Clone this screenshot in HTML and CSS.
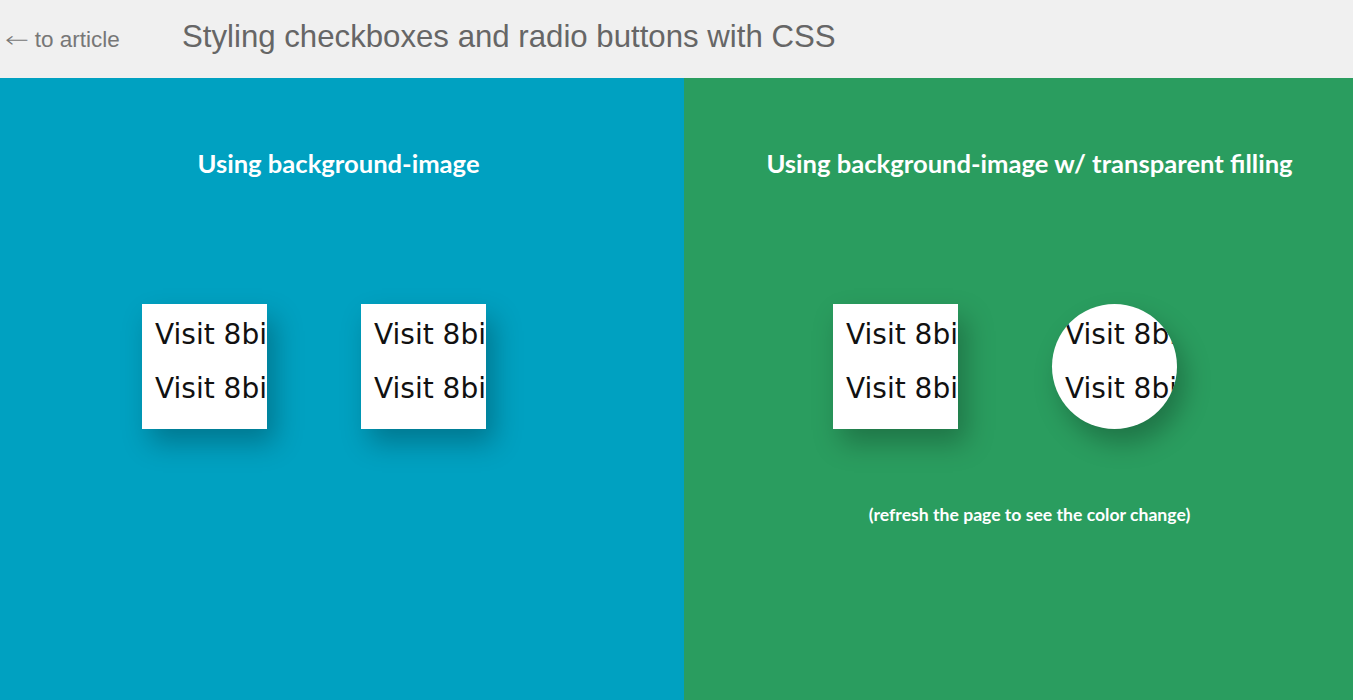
FILE: index.html
```html
<!DOCTYPE html>
<html>
<head>
<meta charset="utf-8">
<link rel="stylesheet" href="styles.css">
</head>
<body>
<header class="topbar">
  <a class="back" href="#"><span class="arrow">&larr;</span> to article</a>
  <h1 class="title">Styling checkboxes and radio buttons with CSS</h1>
</header>
<main class="panels">
  <section class="panel panel-blue">
    <h2 class="heading">Using background-image</h2>
    <div class="row">
      <div class="box"><span>Visit 8bit</span><span>Visit 8bit</span></div>
      <div class="box"><span>Visit 8bit</span><span>Visit 8bit</span></div>
    </div>
  </section>
  <section class="panel panel-green">
    <h2 class="heading">Using background-image w/ transparent filling</h2>
    <div class="row">
      <div class="box"><span>Visit 8bit</span><span>Visit 8bit</span></div>
      <div class="box round"><span>Visit 8bit</span><span>Visit 8bit</span></div>
    </div>
    <p class="note">(refresh the page to see the color change)</p>
  </section>
</main>
</body>
</html>
```
FILE: styles.css
```css
html, body {
  margin: 0;
  padding: 0;
  height: 100%;
  overflow: hidden;
}
body {
  font-family: "Liberation Sans", Arial, sans-serif;
  background: #f0f0f0;
}
.topbar {
  height: 78px;
  background: #f0f0f0;
  display: flex;
  align-items: center;
}
.back {
  color: #777;
  text-decoration: none;
  font-size: 22.5px;
  margin-left: 5px;
  width: 177px;
  padding-top: 1px;
  white-space: nowrap;
}
.arrow {
  display: inline-block;
  font-family: "DejaVu Sans", sans-serif;
  font-size: 22px;
  font-weight: 300;
  transform: scaleX(1.3);
  transform-origin: left center;
  margin-right: 5px;
}
.title {
  margin: 0 0 4px;
  font-weight: normal;
  font-size: 31.2px;
  color: #666;
  white-space: nowrap;
}
.panels {
  display: grid;
  grid-template-columns: 684px 1fr;
  height: 622px;
}
.panel {
  color: #fff;
}
.panel-blue { background: #00a1c1; }
.panel-green { background: #2a9d5f; }
.heading {
  font-family: Lato, "Open Sans", sans-serif;
  font-weight: 700;
  font-size: 25.6px;
  margin: 69px 0 0;
  line-height: 32px;
  text-align: center;
  white-space: nowrap;
}
.panel-blue .heading { padding-right: 7px; }
.panel-green .heading { padding-left: 22px; }
.row {
  display: flex;
  gap: 94px;
  margin-top: 125px;
}
.panel-blue .row { padding-left: 142px; }
.panel-green .row { padding-left: 149px; }
.box {
  width: 125px;
  height: 125px;
  background: #fff;
  overflow: hidden;
  box-shadow: 8px 14px 26px rgba(0, 0, 0, 0.26);
  padding: 4px 0 0 13px;
  box-sizing: border-box;
  font-family: "DejaVu Sans", "Noto Sans", sans-serif;
  font-size: 28px;
  color: #111;
  white-space: nowrap;
}
.box span { display: block; height: 54px; line-height: 54px; }
.round { border-radius: 50%; }
.note {
  font-family: Lato, "Open Sans", sans-serif;
  font-weight: 700;
  font-size: 17.6px;
  margin: 75px 0 0;
  padding-left: 22px;
  text-align: center;
}
```
